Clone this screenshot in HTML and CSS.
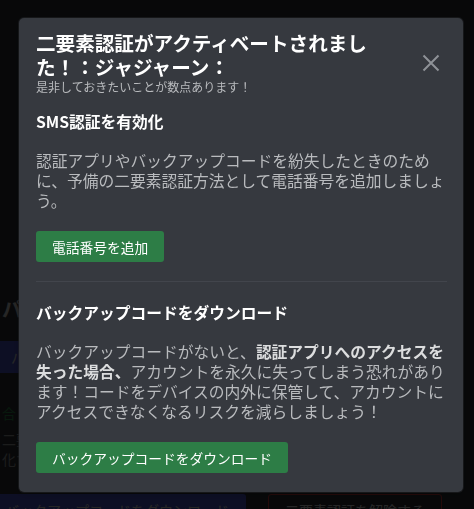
FILE: index.html
```html
<!DOCTYPE html>
<html lang="ja">
<head>
  <meta charset="UTF-8">
  <meta name="viewport" content="width=device-width, initial-scale=1.0">
  <title>二要素認証</title>
  <link rel="stylesheet" href="styles.css">
</head>
<body>
  <!-- Settings page behind the modal -->
  <div class="page">
    <h2 class="page-title">パスワードと認証</h2>
    <button class="page-btn brand">パスワードを変更</button>
    <div class="page-status">合 — 二要素認証が有効になっています</div>
    <p class="page-text">二要素認証でアカウントを保護しましょう。有効<br>化すると、ログイン時にコードが必要になります。</p>
    <div class="page-actions">
      <button class="page-btn brand">バックアップコードをダウンロード</button>
      <button class="page-btn danger">二要素認証を解除する</button>
    </div>
  </div>

  <!-- Modal -->
  <div class="overlay">
    <div class="modal">
      <div class="modal-header">
        <div class="modal-heading">
          <h1 class="modal-title">二要素認証がアクティベートされました！：ジャジャーン：</h1>
          <div class="modal-subtitle">是非しておきたいことが数点あります！</div>
        </div>
        <button class="modal-close" aria-label="閉じる">
          <svg width="18" height="18" viewBox="0 0 18 18">
            <path d="M1.5 1.5 L16.5 16.5 M16.5 1.5 L1.5 16.5" stroke="currentColor" stroke-width="2" fill="none"/>
          </svg>
        </button>
      </div>

      <div class="section section-first">
        <h2 class="section-title">SMS認証を有効化</h2>
        <p class="section-text">認証アプリやバックアップコードを紛失したときのために、予備の二要素認証方法として電話番号を追加しましょう。</p>
        <button class="btn green">電話番号を追加</button>
      </div>

      <div class="divider"></div>

      <div class="section">
        <h2 class="section-title">バックアップコードをダウンロード</h2>
        <p class="section-text">バックアップコードがないと、<strong>認証アプリへのアクセスを失った場合、</strong>アカウントを永久に失ってしまう恐れがあります！コードをデバイスの内外に保管して、アカウントにアクセスできなくなるリスクを減らしましょう！</p>
        <button class="btn green">バックアップコードをダウンロード</button>
      </div>
    </div>
  </div>
</body>
</html>
```

FILE: styles.css
```css
body {
  margin: 0;
  background: #36393f;
  font-family: "Noto Sans CJK JP", "Noto Sans", sans-serif;
  overflow: hidden;
}

/* page behind */
.page {
  padding: 297px 0 0 2px;
  color: #b9bbbe;
}
.page-title {
  margin: 0;
  font-size: 20px;
  line-height: 24px;
  font-weight: 700;
  color: #fff;
}
.page-btn {
  height: 32px;
  padding: 0 16px;
  border: 1px solid transparent;
  border-radius: 3px;
  font-family: inherit;
  font-size: 14px;
  color: #fff;
  background: none;
}
.page-btn.brand {
  background: #5865f2;
}
.page-btn.danger {
  border-color: #ed4245;
}
.page > .page-btn {
  margin: 20px 0 0 -8px;
}
.page-status {
  margin-top: 30px;
  font-size: 14px;
  line-height: 20px;
  color: #3ba55c;
}
.page-text {
  margin: 6px 0 0;
  font-size: 14px;
  line-height: 20px;
}
.page-actions {
  display: flex;
  gap: 22px;
  margin: 25px 0 0 -14px;
}

/* modal */
.overlay {
  position: fixed;
  inset: 0;
  background: rgba(0, 0, 0, 0.85);
}
.modal {
  position: absolute;
  left: 19px;
  top: 18px;
  width: 444px;
  box-sizing: border-box;
  padding: 13px 16px 19px 17px;
  border-radius: 5px;
  background: #36393f;
  box-shadow: 0 0 0 1px rgba(32, 34, 37, 0.6), 0 2px 10px 0 rgba(0, 0, 0, 0.2);
}
.modal-header {
  display: flex;
  align-items: center;
  gap: 40px;
}
.modal-heading {
  flex: 1;
}
.modal-title {
  margin: 0;
  font-size: 19.6px;
  line-height: 24px;
  font-weight: 700;
  color: #fff;
}
.modal-subtitle {
  font-size: 12px;
  line-height: 16px;
  color: #b9bbbe;
}
.modal-close {
  display: flex;
  align-items: center;
  justify-content: center;
  width: 24px;
  height: 24px;
  margin-right: 4px;
  padding: 0;
  border: none;
  background: none;
  color: #8e9297;
}

.section-first {
  margin-top: 17px;
}
.section-title {
  margin: 0;
  font-size: 15.75px;
  line-height: 20px;
  font-weight: 700;
  color: #fff;
}
.section-text {
  margin: 19px 0 0;
  font-size: 15.75px;
  line-height: 20px;
  color: #b9bbbe;
}
.section-text strong {
  color: #dcddde;
}
.btn {
  display: flex;
  align-items: center;
  height: 31px;
  margin-top: 20px;
  padding: 0 16px;
  border: none;
  border-radius: 3px;
  font-family: inherit;
  font-size: 13.75px;
  color: #fff;
}
.btn.green {
  background: #2d7d46;
}
.divider {
  height: 1px;
  margin: 19px 0 21px;
  background: rgba(79, 84, 92, 0.48);
}
```
